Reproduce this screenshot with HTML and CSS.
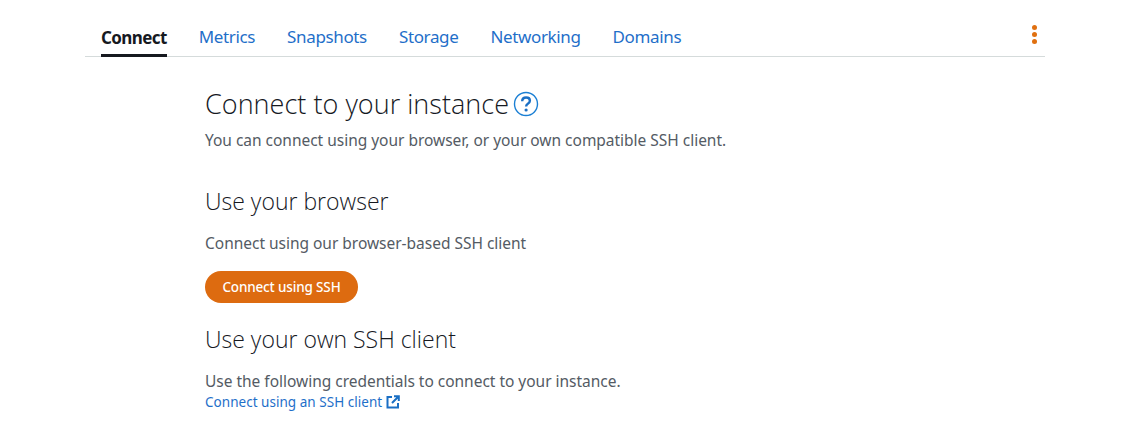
FILE: index.html
```html
<!DOCTYPE html>
<html lang="en">
<head>
<meta charset="utf-8">
<title>Connect</title>
<link rel="stylesheet" href="styles.css">
</head>
<body>
<div class="page">
  <nav class="tabs">
    <a class="tab active">Connect</a>
    <a class="tab">Metrics</a>
    <a class="tab">Snapshots</a>
    <a class="tab">Storage</a>
    <a class="tab">Networking</a>
    <a class="tab">Domains</a>
    <span class="menu"><i></i><i></i><i></i></span>
  </nav>
  <main class="content">
    <h1 class="title">Connect to your instance
      <svg class="help" width="26" height="26" viewBox="0 0 26 26"><circle cx="13" cy="13" r="11.5" fill="none" stroke="#1a7fd4" stroke-width="1.4"/><path d="M9.2 10.2c0-2.3 1.7-3.7 3.9-3.7s3.8 1.3 3.8 3.2c0 2.9-3.8 3-3.8 5.8" fill="none" stroke="#1a6fc4" stroke-width="2.4"/><circle cx="13.1" cy="19" r="1.6" fill="#1a6fc4"/></svg>
    </h1>
    <p class="lead">You can connect using your browser, or your own compatible SSH client.</p>
    <h2 class="sub first">Use your browser</h2>
    <p class="text">Connect using our browser-based SSH client</p>
    <button class="btn">Connect using SSH</button>
    <h2 class="sub second">Use your own SSH client</h2>
    <p class="text tight">Use the following credentials to connect to your instance.</p>
    <a class="link">Connect using an SSH client
      <svg class="ext" width="14" height="14" viewBox="0 0 14 14"><path d="M6 2H1.5v10.5H12V8" fill="none" stroke="#1a6fc4" stroke-width="2"/><path d="M6 8l6-6M8 1.2h4.8V6" fill="none" stroke="#1a6fc4" stroke-width="2"/></svg>
    </a>
  </main>
</div>
</body>
</html>
```
FILE: styles.css
```css
* { box-sizing: border-box; }
html, body { margin: 0; padding: 0; background: #fff; }
body { font-family: "Noto Sans", "Open Sans", sans-serif; color: #16191f; height: 429px; overflow: hidden; }
.page { width: 960px; margin-left: 85px; }
.tabs { display: flex; align-items: flex-end; height: 57px; border-bottom: 1px solid #d5dbdb; position: relative; padding-left: 16px; gap: 32px; }
.tab { font-size: 17px; letter-spacing: -0.36px; line-height: 24px; height: 34px; padding-top: 3px; color: #1f6fc9; }
.tab.active { font-weight: 700; color: #16191f; border-bottom: 3px solid #16191f; margin-bottom: -1px; letter-spacing: -0.6px; }
.menu { position: absolute; right: 8px; top: 25px; display: flex; flex-direction: column; gap: 2px; }
.menu i { display: block; width: 5px; height: 5px; border-radius: 50%; background: #e07010; }
.content { padding-left: 120px; }
.title { margin: 27px 0 0; font-family: "Open Sans", sans-serif; font-size: 27px; font-weight: 300; line-height: 40px; letter-spacing: 0.03px; display: flex; align-items: center; gap: 4px; color: #16191f; }
.help { flex: none; }
.lead, .text { margin: 0; font-size: 15.5px; line-height: 20px; color: #545b64; letter-spacing: -0.02px; }
.lead { margin-top: 6px; }
.sub { margin: 0; font-family: "Open Sans", sans-serif; font-size: 23px; font-weight: 300; line-height: 30px; color: #16191f; letter-spacing: 0; }
.sub.first { margin-top: 36px; }
.sub.second { margin-top: 21px; }
.text { margin-top: 17px; }
.text.tight { margin-top: 17px; }
.btn { display: block; margin-top: 18px; width: 153px; height: 32px; padding: 0; border: 0; border-radius: 16px; background: #dd6b10; color: #fff; font: 500 13.5px/32px "Noto Sans", sans-serif; letter-spacing: -0.15px; }
.link { display: flex; align-items: center; gap: 4px; margin-top: 1px; font-size: 13.5px; line-height: 20px; color: #1f6fc9; letter-spacing: 0.03px; }
```
